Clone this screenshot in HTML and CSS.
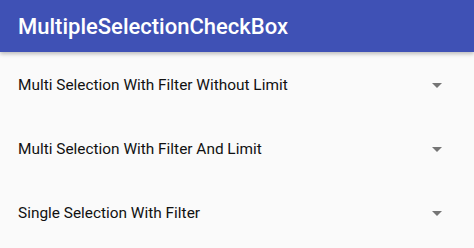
FILE: index.html
```html
<!DOCTYPE html>
<html>
<head>
    <title>MultipleSelectionCheckBox</title>
    <link rel="stylesheet" href="styles.css">
</head>
<body>
    <div class="toolbar">
        <h1 class="title">MultipleSelectionCheckBox</h1>
    </div>

    <div class="list">
        <div class="spinner-row">
            <span class="spinner-label">Multi Selection With Filter Without Limit</span>
            <span class="arrow"></span>
        </div>
        <div class="spinner-row">
            <span class="spinner-label">Multi Selection With Filter And Limit</span>
            <span class="arrow"></span>
        </div>
        <div class="spinner-row">
            <span class="spinner-label">Single Selection With Filter</span>
            <span class="arrow"></span>
        </div>
    </div>
</body>
</html>
```

FILE: styles.css
```css
html, body {
    margin: 0;
    padding: 0;
}

body {
    font-family: Roboto, "Noto Sans", Arial, sans-serif;
    background-color: #fafafa;
    width: 474px;
    height: 248px;
    overflow: hidden;
}

.toolbar {
    height: 52px;
    background-color: #3f51b5;
    display: flex;
    align-items: center;
    padding: 0 18px;
    box-shadow: 0 2px 4px rgba(0,0,0,0.25);
    position: relative;
}

.title {
    margin: 0;
    color: #fff;
    font-size: 22px;
    font-weight: 500;
}

.list {
    padding-top: 1px;
}

.spinner-row {
    height: 64px;
    display: flex;
    align-items: center;
    justify-content: space-between;
    padding: 0 32px 0 18px;
}

.spinner-label {
    font-size: 15.4px;
    color: #111;
}

.arrow {
    width: 0;
    height: 0;
    border-left: 5px solid transparent;
    border-right: 5px solid transparent;
    border-top: 5px solid #757575;
}
```
